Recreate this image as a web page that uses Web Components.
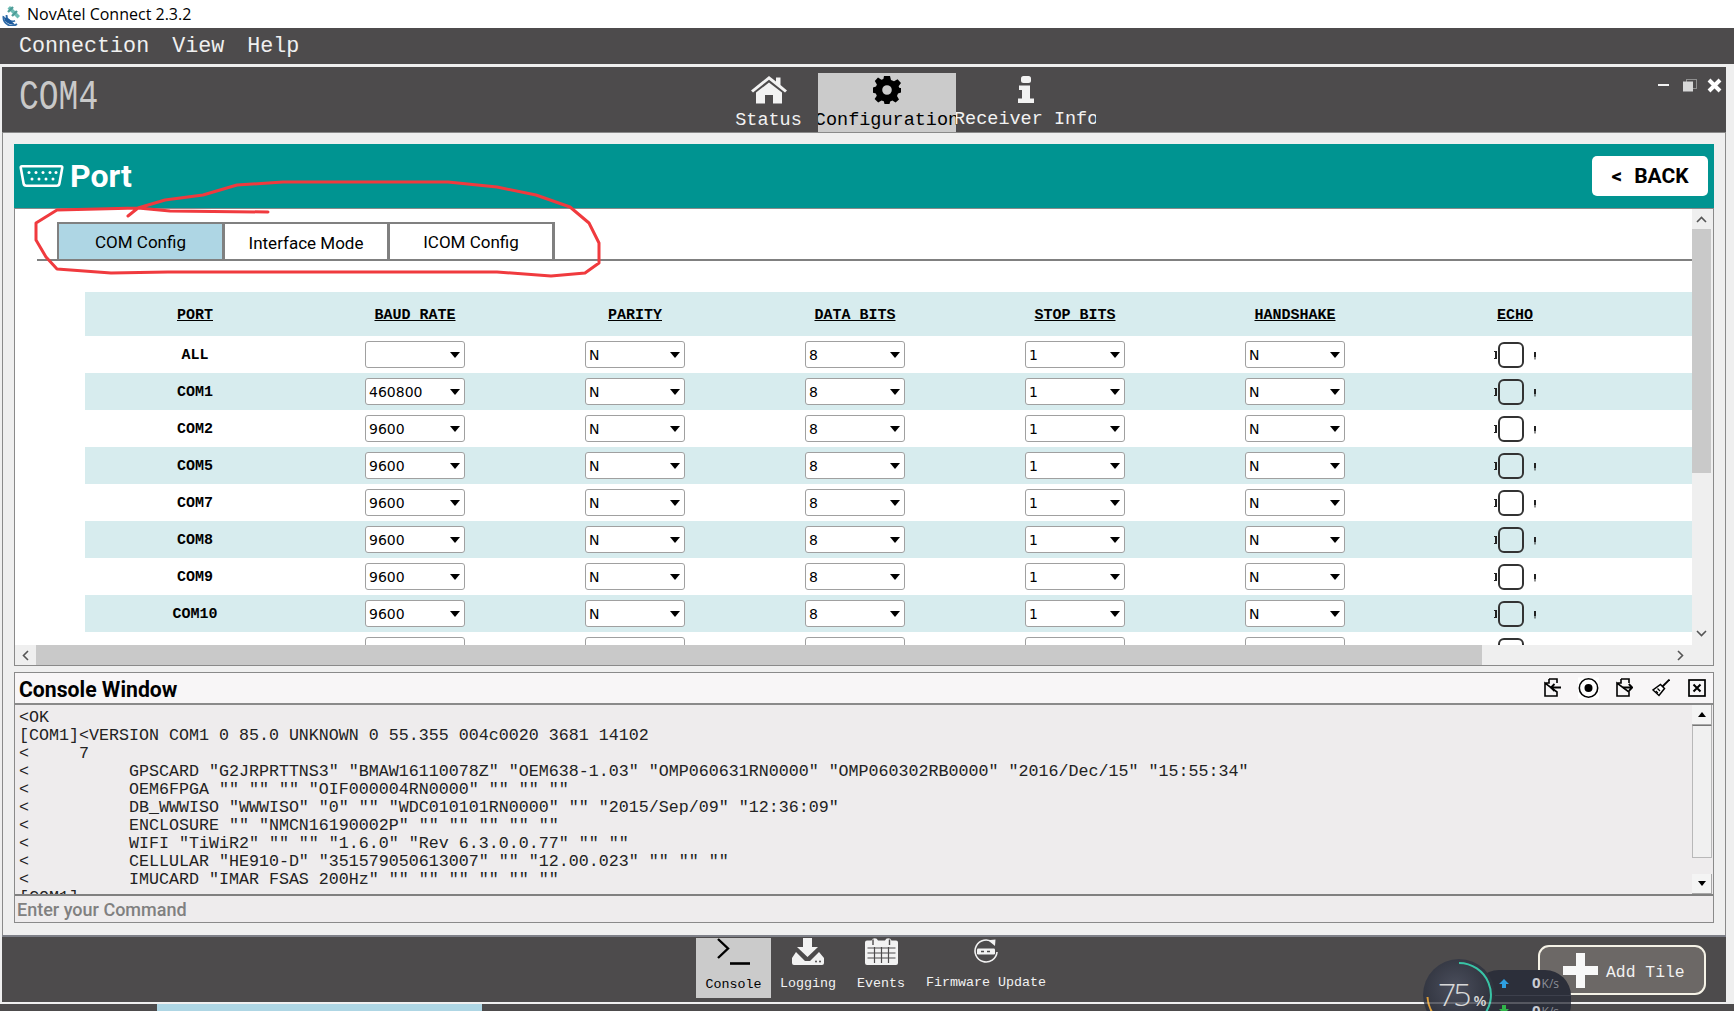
<!DOCTYPE html>
<html>
<head>
<meta charset="utf-8">
<title>NovAtel Connect 2.3.2</title>
<style>
    html, body { margin: 0; padding: 0; height: 1011px; overflow: hidden; background: #fff; }
    body { font-family: 'Liberation Sans', sans-serif; }
    nv-app { width: 1734px; height: 1011px; }
</style>
</head>
<body>
<nv-app>
    <nv-titlebar>NovAtel Connect 2.3.2</nv-titlebar>
    <nv-menubar></nv-menubar>
    <nv-window></nv-window>
    <nv-markup></nv-markup>
    <nv-net-widget></nv-net-widget>
</nv-app>

<script>
// Icons, all inline
const ICONS = {
    home: `<svg width="36" height="28" viewBox="0 0 36 28"><path d="M18 0 L25 5.5 V1.5 H29.5 V9 L36 14.5 L34 16.5 L18 3.8 L2 16.5 L0 14.5 Z" fill="#f2f2f2"/><path d="M18 6.5 L31 16.5 V27.5 H22 V19 H14 V27.5 H5 V16.5 Z" fill="#f2f2f2"/></svg>`,
    gear: `<svg width="28" height="28" viewBox="0 0 28 28"><path fill-rule="evenodd" fill="#000" d="M11 0H17L18 4 21 5.3 24.6 3.2 28 7 25.6 10.2 26.5 12H28V16.5L25 17.4 24 20 26 23.6 22.6 26.6 19.4 24.5 17.2 25.4 16.5 28H11.5L10.8 25.3 8.5 24.4 5.2 26.6 1.6 23 3.8 19.8 2.8 17.5 0 16.8V11.5L3 10.6 3.9 8.4 1.8 5 5 1.6 8.4 3.8 10.4 3Z M14 9.2A4.8 4.8 0 1 0 14 18.8 4.8 4.8 0 1 0 14 9.2Z"/></svg>`,
    info: `<svg width="16" height="27" viewBox="0 0 16 27"><g fill="#f2f2f2"><rect x="3" y="0" width="10" height="7" rx="2.5"/><path d="M1 9.5 H12 V22.5 H16 V27 H0 V22.5 H4 V14 H1 Z"/></g></svg>`,
    port: `<svg width="45" height="24" viewBox="0 0 45 24"><path d="M3 2.2 H42 Q43.6 2.2 43.2 4 L40.4 19.6 Q40 21.8 37.8 21.8 H7.2 Q5 21.8 4.6 19.6 L1.8 4 Q1.4 2.2 3 2.2 Z" fill="none" stroke="#fff" stroke-width="2.6"/><g fill="#fff"><circle cx="10" cy="8.4" r="1.5"/><circle cx="17" cy="8.4" r="1.5"/><circle cx="24" cy="8.4" r="1.5"/><circle cx="31" cy="8.4" r="1.5"/><circle cx="37" cy="8.4" r="1.5"/><circle cx="13" cy="15" r="1.5"/><circle cx="20" cy="15" r="1.5"/><circle cx="27" cy="15" r="1.5"/><circle cx="34" cy="15" r="1.5"/></g></svg>`,
    logo: `<svg width="20" height="22" viewBox="0 0 20 22"><g fill="none" stroke="#2f6ba8" stroke-width="1.8"><path d="M1.5 12 A8.5 8.5 0 0 0 15 20"/><path d="M4.5 11 A6 6 0 0 0 13 16.8"/></g><path d="M2 13 A9 8 0 0 0 13 20.5 L7 15 Z" fill="#1d5a9c"/><path d="M8 2 L18 12 L15.5 14.5 L5.5 4.5 Z" fill="#6cbcb4"/><path d="M6 8 L11 3 M10 12 L15 7" stroke="#4e9c98" stroke-width="2.4"/></svg>`,
    importFile: `<svg width="17" height="19" viewBox="0 0 17 19"><path d="M5 1 H13 V5 M13 14 V18 H1 V5 Z M5 1 V5 H1" fill="none" stroke="#000" stroke-width="1.6"/><path d="M17 9.5 H7 M10.5 6 L7 9.5 L10.5 13" fill="none" stroke="#000" stroke-width="1.8"/></svg>`,
    record: `<svg width="24" height="24" viewBox="0 0 24 24"><rect width="24" height="24" fill="#fff"/><circle cx="12" cy="12" r="10.5" fill="#fff" stroke="#000" stroke-width="1.8"/><circle cx="12" cy="12" r="4.6" fill="#000"/></svg>`,
    exportFile: `<svg width="17" height="19" viewBox="0 0 17 19"><path d="M5 1 H13 V5 M13 14 V18 H1 V5 Z M5 1 V5 H1" fill="none" stroke="#000" stroke-width="1.6"/><path d="M7 9.5 H16 M12.8 6 L16.3 9.5 L12.8 13" fill="none" stroke="#000" stroke-width="1.8"/></svg>`,
    brush: `<svg width="18" height="18" viewBox="0 0 18 18"><path d="M17.5 .5 L10.5 7.5" stroke="#000" stroke-width="1.8"/><path d="M8.5 5.5 L12.5 9.5 L7 16.5 L1 11 Z" fill="#fff" stroke="#000" stroke-width="1.5"/><path d="M5.5 9.5 L8 12 M3.8 12 L6 14" stroke="#000" stroke-width="1.3"/></svg>`,
    closeBox: `<svg width="18" height="18" viewBox="0 0 18 18"><rect x="1" y="1" width="16" height="16" fill="none" stroke="#000" stroke-width="1.7"/><path d="M5.5 5.5 L12.5 12.5 M12.5 5.5 L5.5 12.5" stroke="#000" stroke-width="2"/></svg>`,
    console: `<svg width="36" height="28" viewBox="0 0 36 28"><path d="M2 1 L12 10.5 L2 20" fill="none" stroke="#000" stroke-width="2.4"/><path d="M14 25.5 H34" stroke="#000" stroke-width="2.6"/></svg>`,
    logging: `<svg width="34" height="27" viewBox="0 0 34 27"><path d="M12 0 H21 V9 H27 L16.5 19 L6 9 H12 Z" fill="#f2f2f2"/><path d="M5 14 L14 23 H19 L28 14 L33 20 V25 Q33 27 31 27 H3 Q1 27 1 25 V20 Z" fill="#f2f2f2"/><circle cx="25" cy="23.5" r="1" fill="#4d4b4c"/><circle cx="29" cy="23.5" r="1" fill="#4d4b4c"/></svg>`,
    events: `<svg width="33" height="27" viewBox="0 0 33 27"><path d="M2 2.5 H6.5 A3.5 3.5 0 0 1 13 2.5 H20 A3.5 3.5 0 0 1 26.5 2.5 H31 Q33 2.5 33 4.5 V25 Q33 27 31 27 H2 Q0 27 0 25 V4.5 Q0 2.5 2 2.5 Z" fill="#f2f2f2"/><path d="M8 1.5 V7 M24.5 1.5 V7" stroke="#4d4b4c" stroke-width="1.4"/><path d="M2.5 10 H30.5 M2.5 15 H30.5 M2.5 20 H30.5 M9.5 9 V25 M16.5 9 V25 M23.5 9 V25" stroke="#4d4b4c" stroke-width="1.2"/></svg>`,
    firmware: `<svg width="26" height="26" viewBox="0 0 26 26"><path d="M20 4.5 A11 11 0 1 0 24 14" fill="none" stroke="#f2f2f2" stroke-width="1.6"/><path d="M15 2.2 L22.5 1.5 L22 8 Z" fill="#f2f2f2"/><rect x="4" y="10.5" width="18" height="6" rx="1.2" fill="#f2f2f2"/><path d="M8 13.5 H11 M14 13.5 H17" stroke="#4d4b4c" stroke-width="1.6"/></svg>`
};

const CONSOLE_TEXT = `<OK
[COM1]<VERSION COM1 0 85.0 UNKNOWN 0 55.355 004c0020 3681 14102
<     7
<          GPSCARD "G2JRPRTTNS3" "BMAW16110078Z" "OEM638-1.03" "OMP060631RN0000" "OMP060302RB0000" "2016/Dec/15" "15:55:34"
<          OEM6FPGA "" "" "" "OIF000004RN0000" "" "" ""
<          DB_WWWISO "WWWISO" "0" "" "WDC010101RN0000" "" "2015/Sep/09" "12:36:09"
<          ENCLOSURE "" "NMCN16190002P" "" "" "" "" ""
<          WIFI "TiWiR2" "" "" "1.6.0" "Rev 6.3.0.0.77" "" ""
<          CELLULAR "HE910-D" "351579050613007" "" "12.00.023" "" "" ""
<          IMUCARD "IMAR FSAS 200Hz" "" "" "" "" "" ""
[COM1]`.replace(/</g, '&lt;');

// Flat elements that only need a template
function simple(name, html) {
    customElements.define(name, class extends HTMLElement {
        constructor() {
            super();
            this.attachShadow({ mode: 'open' });
            this.shadowRoot.innerHTML = html;
        }
    });
}

simple('nv-app', `
    <style>:host { display: flex; flex-direction: column; }</style>
    <slot></slot>`);

simple('nv-titlebar', `
    <style>
        :host { display: flex; align-items: center; height: 28px; flex: none; background: #fff; color: #000;
                font: 16px 'Open Sans', sans-serif; }
        .logo { margin: 1px 5px 0 2px; display: flex; }
    </style>
    <span class="logo">${ICONS.logo}</span><slot></slot>`);

simple('nv-menubar', `
    <style>
        :host { display: flex; gap: 23px; height: 36px; flex: none; padding-left: 19px; align-items: center;
                background: #4d4b4c; color: #f0f0f0; font: 21.7px 'Liberation Mono', monospace; }
    </style>
    <span>Connection</span><span>View</span><span>Help</span>`);

// Top nav and bottom nav share this one
class NvNav extends HTMLElement {
    constructor() {
        super();
        this.attachShadow({ mode: 'open' });
    }
    connectedCallback() {
        const icon = ICONS[this.getAttribute('icon')];
        this.shadowRoot.innerHTML = `
        <style>
            :host { display: flex; flex-direction: column; align-items: center; flex: none; overflow: hidden;
                    box-sizing: border-box; color: #f2f2f2; font-family: 'Liberation Mono', monospace; white-space: nowrap; }
            :host([active]) { background: #cbcbcb; color: #000; }
            :host([start]) { align-items: flex-start; }
            .icon { display: flex; align-items: flex-end; justify-content: center; align-self: center;
                    margin-bottom: var(--label-gap, 5px); }
        </style>
        <div class="icon">${icon}</div><slot></slot>`;
    }
}
customElements.define('nv-nav', NvNav);

class NvSelect extends HTMLElement {
    constructor() {
        super();
        this.attachShadow({ mode: 'open' });
    }
    connectedCallback() {
        this.shadowRoot.innerHTML = `
        <style>
            :host { display: flex; align-items: center; box-sizing: border-box; width: 100px; height: 27px;
                    background: #fff; border: 1px solid #a0a0a0; border-radius: 3px; padding: 0 4px 0 3px;
                    color: #000; font: 14px 'DejaVu Sans', sans-serif; }
            span { flex: 1; }
            i { width: 0; height: 0; border: 5px solid transparent; border-top: 6px solid #000; border-bottom: 0; }
        </style>
        <span>${this.getAttribute('value') || ''}</span><i></i>`;
    }
}
customElements.define('nv-select', NvSelect);

simple('nv-check', `
    <style>
        :host { display: flex; align-items: center; }
        .l { width: 3px; height: 8px; border: solid #222; border-width: 1px 2px 1px 0; box-sizing: border-box; margin: 1px 1px 0 0; }
        .box { width: 26px; height: 26px; box-sizing: border-box; border: 2px solid #333; border-radius: 6px; background: transparent; }
        .r { width: 2px; height: 5px; background: #222; margin: 0 0 0 10px; box-shadow: 0 3px 0 -0.5px #222; }
    </style>
    <div class="l"></div><div class="box"></div><div class="r"></div>`);

class NvRow extends HTMLElement {
    constructor() {
        super();
        this.attachShadow({ mode: 'open' });
    }
    connectedCallback() {
        const port = this.getAttribute('port') || '';
        const baud = this.getAttribute('baud') || '';
        const sel = this.hasAttribute('blank')
            ? [1, 2, 3, 4, 5].map(() => '<nv-select></nv-select>')
            : [baud, 'N', '8', '1', 'N'].map(v => `<nv-select value="${v}"></nv-select>`);
        this.shadowRoot.innerHTML = `
        <style>
            :host { display: grid; grid-template-columns: repeat(7, 220px); height: 37px; align-items: center;
                    justify-items: center; color: #000; font: bold 15px 'Liberation Mono', monospace; }
            :host([shade]) { background: #d7ecee; }
            div { padding-top: 2px; }
        </style>
        <div>${port}</div>${sel.join('')}<nv-check></nv-check>`;
    }
}
customElements.define('nv-row', NvRow);

simple('nv-head-row', `
    <style>
        :host { display: grid; grid-template-columns: repeat(7, 220px); height: 44px; align-items: center;
                justify-items: center; background: #d7ecee; color: #000;
                font: bold 15px 'Liberation Mono', monospace; text-decoration: underline; white-space: pre; }
        div { padding-top: 2px; }
    </style>
    <div>PORT</div><div>BAUD RATE</div><div>PARITY</div><div>DATA BITS</div><div>STOP BITS</div><div>HANDSHAKE</div><div>ECHO</div>`);

simple('nv-tabs', `
    <style>
        :host { display: flex; height: 37px; margin: 13px 0 0 22px; width: 1656px; border-bottom: 2px solid #808080;
                box-sizing: content-box; color: #000; font: 17px Roboto, sans-serif; }
        .t { width: 168px; box-sizing: border-box; display: flex; align-items: center; justify-content: center;
             border: solid #808080; border-width: 2px 3px 0 3px; margin-left: -3px; background: #fff; }
        .t.on { margin-left: 20px; background: #aed6e4; width: 168px; border-left-width: 2px; }
        .t.i { padding-top: 2px; }
    </style>
    <div class="t on">COM Config</div><div class="t i">Interface Mode</div><div class="t">ICOM Config</div>`);

// Whole port page: teal heading, tabs, table and its two scrollbars
simple('nv-port-page', `
    <style>
        :host { display: flex; flex-direction: column; height: 522px; flex: none; margin: 11px 0 0 11px; width: 1700px; }
        .head { display: flex; align-items: center; height: 65px; flex: none; background: #009491; color: #fff;
                border-bottom: 1px solid #8a8a8a; box-sizing: border-box; }
        .head h1 { margin: 0 0 0 6px; font: bold 32px Roboto, sans-serif; flex: 1; }
        .head svg { margin: 0 0 0 5px; }
        .back { display: flex; align-items: center; justify-content: center; gap: 12px; width: 116px; height: 40px; margin-right: 6px;
                background: #fff; border-radius: 5px; color: #000; font: bold 21px Roboto, sans-serif; }
        .frame { flex: 1; min-height: 0; display: grid; grid-template-columns: 1fr 21px; grid-template-rows: 1fr 20px;
                 border: solid #8a8a8a; border-width: 0 1px 1px 1px; background: #efefef; }
        .view { background: #fff; overflow: hidden; }
        .rows { margin: 31px 0 0 70px; width: 1607px; }
        .vbar { grid-row: 1; grid-column: 2; display: flex; flex-direction: column; background: #efefef; align-items: stretch; }
        .vbar .thumb { height: 244px; background: #c9c9c9; margin: 0 2px 0 0; }
        .vbar .space { flex: 1; }
        .arrow { height: 20px; flex: none; display: flex; align-items: center; justify-content: center; margin-right: 2px; }
        .vbar .arrow:last-child { margin-bottom: 2px; }
        .hbar { grid-row: 2; grid-column: 1 / 3; display: flex; align-items: center; background: #efefef; }
        .hbar .thumb { width: 1446px; height: 20px; background: #c9c9c9; }
        .hbar .arrow { width: 21px; height: 20px; margin: 0; }
        .hbar .space { flex: 1; }
    </style>
    <div class="head">
        ${ICONS.port}<h1>Port</h1>
        <div class="back"><span>&lt;</span><span>BACK</span></div>
    </div>
    <div class="frame">
        <div class="view">
            <nv-tabs></nv-tabs>
            <div class="rows">
                <nv-head-row></nv-head-row>
                <nv-row port="ALL" baud=""></nv-row>
                <nv-row port="COM1" baud="460800" shade></nv-row>
                <nv-row port="COM2" baud="9600"></nv-row>
                <nv-row port="COM5" baud="9600" shade></nv-row>
                <nv-row port="COM7" baud="9600"></nv-row>
                <nv-row port="COM8" baud="9600" shade></nv-row>
                <nv-row port="COM9" baud="9600"></nv-row>
                <nv-row port="COM10" baud="9600" shade></nv-row>
                <nv-row blank></nv-row>
            </div>
        </div>
        <div class="vbar">
            <div class="arrow"><svg width="11" height="7" viewBox="0 0 11 7"><path d="M1 6 L5.5 1.5 L10 6" fill="none" stroke="#555" stroke-width="1.6"/></svg></div>
            <div class="thumb"></div>
            <div class="space"></div>
            <div class="arrow"><svg width="11" height="7" viewBox="0 0 11 7"><path d="M1 1 L5.5 5.5 L10 1" fill="none" stroke="#555" stroke-width="1.6"/></svg></div>
        </div>
        <div class="hbar">
            <div class="arrow"><svg width="7" height="11" viewBox="0 0 7 11"><path d="M6 1 L1.5 5.5 L6 10" fill="none" stroke="#555" stroke-width="1.6"/></svg></div>
            <div class="thumb"></div>
            <div class="space"></div>
            <div class="arrow" style="margin-right:22px"><svg width="7" height="11" viewBox="0 0 7 11"><path d="M1 1 L5.5 5.5 L1 10" fill="none" stroke="#555" stroke-width="1.6"/></svg></div>
        </div>
    </div>`);

simple('nv-console', `
    <style>
        :host { display: flex; flex-direction: column; height: 251px; flex: none; margin: 6px 0 0 11px; width: 1700px;
                box-sizing: border-box; border: 1px solid #8a8a8a; background: #eeeced; }
        .bar { display: flex; align-items: center; height: 32px; flex: none; background: #f8f6f7; border-bottom: 2px solid #8a8a8a;
               box-sizing: border-box; padding: 3px 6px 0 4px; }
        .bar b { flex: 1; font: bold 21.2px Roboto, sans-serif; color: #000; }
        .tools { display: flex; align-items: center; gap: 15px; margin-top: -4px; }
        .tools span { display: flex; width: 21px; justify-content: center; }
        .body { display: flex; height: 189px; flex: none; border-bottom: 2px solid #808080; box-sizing: content-box; overflow: hidden; }
        pre { flex: 1; margin: 0; padding: 4px 0 0 4px; overflow: hidden; font: 16.67px/18px 'Liberation Mono', monospace; color: #222; }
        .sb { width: 20px; flex: none; display: flex; flex-direction: column; margin-right: 1px; }
        .btn { height: 20px; flex: none; background: #f4f4f4; border: solid #a8a8a8; border-width: 0 1px 1px 0;
               display: flex; align-items: center; justify-content: center; box-sizing: border-box; }
        .btn i { width: 0; height: 0; border: 4.5px solid transparent; }
        .btn.up i { border-top: 0; border-bottom: 5px solid #000; }
        .btn.dn i { border-bottom: 0; border-top: 5px solid #000; }
        .track { flex: 1; display: flex; flex-direction: column; }
        .track div { height: 133px; background: #f0f0f0; border: 1px solid #b8b8b8; border-top-color: #777; box-sizing: border-box; }
        .cmd { height: 26px; flex: none; padding: 0 2px; display: flex; align-items: center; color: #808080; font: 500 18px Roboto, sans-serif; }
    </style>
    <div class="bar">
        <b>Console Window</b>
        <div class="tools">
            <span>${ICONS.importFile}</span><span>${ICONS.record}</span><span>${ICONS.exportFile}</span><span>${ICONS.brush}</span><span>${ICONS.closeBox}</span>
        </div>
    </div>
    <div class="body">
        <pre>${CONSOLE_TEXT}</pre>
        <div class="sb">
            <div class="btn up"><i></i></div>
            <div class="track"><div></div></div>
            <div class="btn dn"><i></i></div>
        </div>
    </div>
    <div class="cmd">Enter your Command</div>`);

simple('nv-add-tile', `
    <style>
        :host { display: flex; align-items: center; box-sizing: border-box; width: 168px; height: 50px;
                border: 2px solid #f5f2e6; border-radius: 11px; background: #6c6866; color: #f2f2f2;
                font: 16.4px 'Liberation Mono', monospace; padding-left: 23px; gap: 8px; }
        span { padding-top: 4px; }
    </style>
    <svg width="35" height="35" viewBox="0 0 35 35"><path d="M13 0 H22 V13 H35 V22 H22 V35 H13 V22 H0 V13 H13 Z" fill="#f8f8f8"/></svg>
    <span>Add Tile</span>`);

simple('nv-net-widget', `
    <style>
        :host { position: absolute; left: 1423px; top: 959px; width: 148px; height: 52px; display: block; overflow: hidden; pointer-events: none; }
        .pill { position: absolute; left: 50px; top: 11px; width: 98px; height: 60px; border-radius: 26px; background: #2c2f3a; }
        .dial { position: absolute; left: 0; top: 0; width: 72px; height: 72px; border-radius: 50%; background: radial-gradient(circle at 45% 40%, #4a4e5c, #2b2e38 75%); }
        svg { position: absolute; left: 0; top: 0; }
        .p { position: absolute; left: 15px; top: 13px; color: #d8d8d8; font: 300 32px 'Open Sans', sans-serif; letter-spacing: -3px; white-space: nowrap; }
        .p small { font-size: 15px; letter-spacing: 0; font-weight: 600; margin-left: 5px; }
        .sp { position: absolute; left: 109px; color: #c9cbd2; font: bold 15px 'Open Sans', sans-serif; }
        .sp small { font-size: 12px; font-weight: 400; color: #8b8e98; margin-left: 1px; }
        .sep { position: absolute; left: 72px; top: 36px; width: 76px; height: 1px; background: #3d404c; }
        .shine { position: absolute; left: 0; top: 43px; width: 100%; height: 2px; background: rgba(255,255,255,.2); }
    </style>
    <div class="pill"></div>
    <div class="sep"></div>
    <div class="dial"></div>
    <svg width="72" height="72" viewBox="0 0 72 72">
        <path d="M36 4 A32 32 0 0 1 58.6 58.6" fill="none" stroke="#39c4a6" stroke-width="2"/>
        <path d="M4.5 38 A32 32 0 0 0 9 53" fill="none" stroke="#e0a03a" stroke-width="2"/>
    </svg>
    <div class="p">75<small>%</small></div>
    <svg style="left:76px;top:20px" width="10" height="9" viewBox="0 0 10 9"><path d="M5 0 L10 5 H7 V9 H3 V5 H0 Z" fill="#2f9fe0"/></svg>
    <svg style="left:76px;top:46px" width="10" height="9" viewBox="0 0 10 9"><path d="M5 9 L10 4 H7 V0 H3 V4 H0 Z" fill="#31b54a"/></svg>
    <div class="sp" style="top:13px">0<small>K/s</small></div>
    <div class="sp" style="top:41px">0<small>K/s</small></div>
    <div class="shine"></div>`);

// Red pen marking around the tabs
simple('nv-markup', `
    <style>:host { position: absolute; left: 0; top: 0; display: block; pointer-events: none; } svg { display: block; }</style>
    <svg width="640" height="300" viewBox="0 0 640 300">
        <path d="M128 216 L138 208 L165 200 L203 195 L237 185 L283 182 L448 182 L497 187 L536 195 L570 207 L589 223 L599 243 L599 263 L585 273 L551 276 L497 272 L168 272 L111 273 L57 269 L46 257 L36 240 L36 223 L57 210 L138 208 L170 211 L268 212"
              fill="none" stroke="#f03a3e" stroke-width="3" stroke-linejoin="round" stroke-linecap="round"/>
    </svg>`);

simple('nv-window', `
    <style>
        :host { display: flex; flex-direction: column; flex: 1; background: #efefef; position: relative; }
        .frame { margin: 3px 8px 0 2px; border: solid #8a8a8a; border-width: 0 1px; display: flex; flex-direction: column; flex: none; height: 935px; background: #efefef; }
        .top { display: flex; height: 65px; flex: none; margin: 0 -1px; background: #4d4b4c; border-bottom: 1px solid #8a8a8a; position: relative; box-sizing: content-box; }
        .com { position: absolute; left: 17px; top: 7px; color: #c9c9c9; font: 33px 'Liberation Mono', monospace; transform: scaleY(1.3); transform-origin: top; }
        .nav { display: flex; margin-left: 717px; padding-top: 6px; box-sizing: border-box; height: 65px; font-size: 18.5px; }
        .nav nv-nav { height: 59px; line-height: 22px; padding-top: 3px; --label-gap: 6px; }
        .nav nv-nav[start] { text-indent: -2px; }
        .ctl { position: absolute; right: 4px; top: 11px; display: flex; align-items: center; gap: 10px; }
        .ctl svg:first-child { margin-right: 4px; }
        .foot { position: relative; margin: 12px -1px 0; height: 67px; flex: none; background: #4d4b4c; border-top: 2px solid #7e8088; box-sizing: border-box; }
        .fnav { display: flex; margin-left: 694px; font-size: 13.33px; padding-top: 1px; height: 60px; }
        .fnav nv-nav { height: 60px; line-height: 18px; --label-gap: 10px; }
        nv-add-tile { position: absolute; left: 1536px; top: 8px; }
        .under { display: flex; height: 9px; flex: none; margin-top: 2px; background: #4d4b4c; }
        .under .gap { width: 157px; }
        .under .blue { width: 325px; background: #aed6e4; }
    </style>
    <div class="frame">
        <div class="top">
            <div class="com">COM4</div>
            <div class="nav">
                <nv-nav icon="home" style="width:99px">Status</nv-nav>
                <nv-nav icon="gear" active style="width:138px">Configuration</nv-nav>
                <nv-nav icon="info" start style="width:140px">Receiver Info</nv-nav>
            </div>
            <div class="ctl">
                <svg width="11" height="3" viewBox="0 0 11 3"><rect width="11" height="2" fill="#f2f2f2"/></svg>
                <svg width="14" height="13" viewBox="0 0 14 13"><rect x="3.5" y=".5" width="10" height="9" fill="none" stroke="#8f8f8f"/><rect x="0" y="2.5" width="10" height="10" fill="#d8d8d8"/></svg>
                <svg width="15" height="15" viewBox="0 0 15 15"><path d="M2 2 L13 13 M13 2 L2 13" stroke="#fff" stroke-width="4"/></svg>
            </div>
        </div>
        <nv-port-page></nv-port-page>
        <nv-console></nv-console>
        <div class="foot">
            <div class="fnav">
                <nv-nav icon="console" active style="width:75px">Console</nv-nav>
                <nv-nav icon="logging" style="width:74px">Logging</nv-nav>
                <nv-nav icon="events" style="width:72px">Events</nv-nav>
                <nv-nav icon="firmware" style="width:138px">Firmware Update</nv-nav>
            </div>
            <nv-add-tile></nv-add-tile>
        </div>
    </div>
    <div class="under"><div class="gap"></div><div class="blue"></div></div>`);
</script>
</body>
</html>
